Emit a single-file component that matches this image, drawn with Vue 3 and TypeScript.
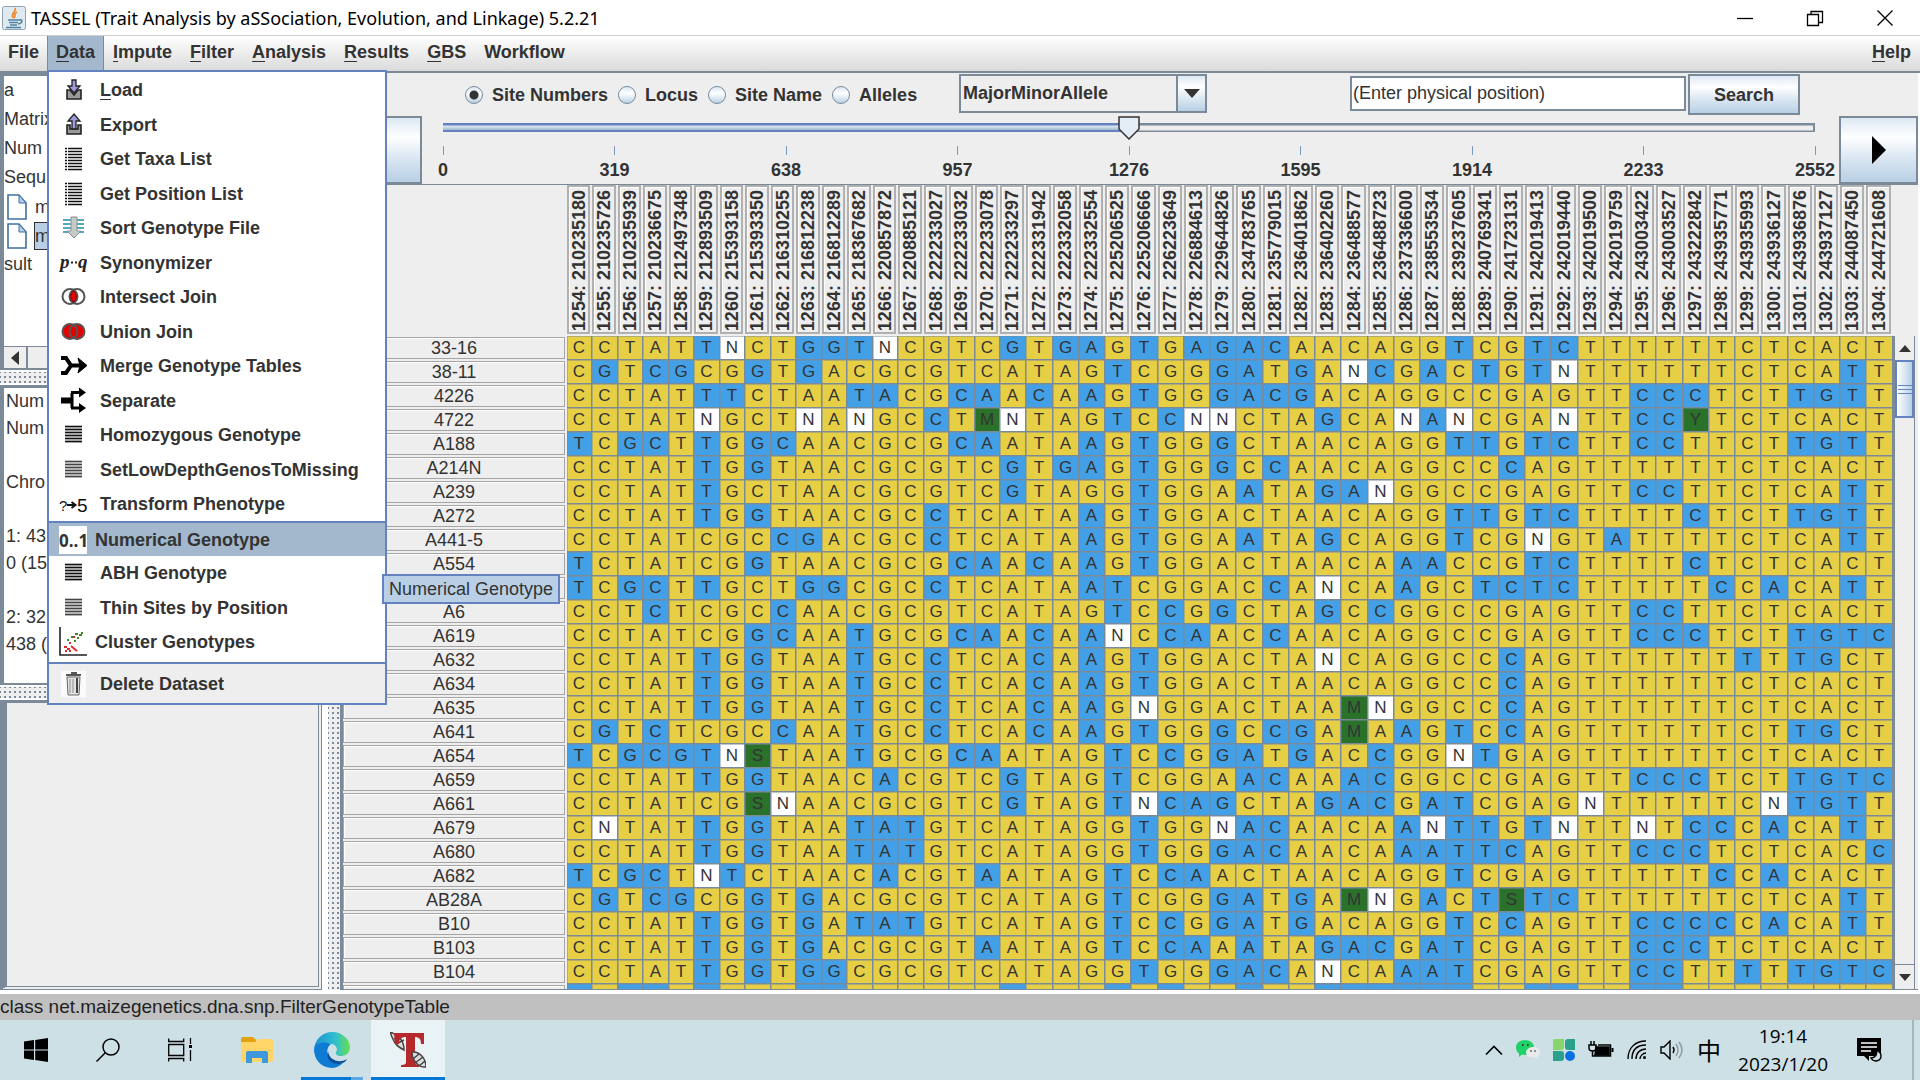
<script setup lang="ts">
import { ref } from 'vue'

interface MenuItem {
  label: string
  icon: string
  mnemonic?: boolean
  tight?: boolean
}

const menuNames = ['File', 'Data', 'Impute', 'Filter', 'Analysis', 'Results', 'GBS', 'Workflow']
const plainMenus = ['File', 'Workflow']
const openMenu = ref('Data')
const highlighted = ref('Numerical Genotype')

const taxaLines = Array.from({ length: 8 }, (_, i) => `<path d="M6 ${4.5 + i * 3}h2M9 ${4.5 + i * 3}h14" stroke="#111" stroke-width="1.6"/>`).join('')
const rowLines = (color: string) =>
  '<path d="M6 6h17v17H6z" fill="#e2e2e2"/>' +
  Array.from({ length: 6 }, (_, i) => `<path d="M6 ${6.5 + i * 3}h17" stroke="${color}" stroke-width="1.6"/>`).join('')

const icons: Record<string, string> = {
  load: '<path d="M8 15v9h14v-9h-3l-4 5-4-5z" fill="#9a9a9a" stroke="#222" stroke-width="1.6"/><path d="M13 5h4v6h4l-6 7-6-7h4z" fill="#9c9cdc" stroke="#222" stroke-width="1.3"/>',
  export: '<path d="M8 15v9h14v-9h-3v4h-8v-4z" fill="#9a9a9a" stroke="#222" stroke-width="1.6"/><path d="M13 19h4v-8h4l-6-7-6 7h4z" fill="#9c9cdc" stroke="#222" stroke-width="1.3"/>',
  taxa: taxaLines,
  sort: '<path d="M4 7h21M4 11h21M4 15h21M4 19h21" stroke="#55a9bd" stroke-width="2"/><path d="M12 4h6v14h4l-7 7-7-7h4z" fill="#c5c9c7" stroke="#8b928f"/>',
  synonym: '<text x="1" y="20" font-family="Liberation Serif, serif" font-style="italic" font-weight="bold" font-size="19" fill="#222">p</text><path d="M12 14.500h2M16 14.500h2" stroke="#222" stroke-width="2"/><text x="19" y="20" font-family="Liberation Serif, serif" font-style="italic" font-weight="bold" font-size="19" fill="#222">q</text>',
  intersect: '<circle cx="11" cy="14.500" r="7.500" fill="#fff" stroke="#555" stroke-width="2"/><circle cx="18" cy="14.500" r="7.500" fill="none" stroke="#555" stroke-width="2"/><path d="M14.500 8.500q6 6 0 12q-6-6 0-12z" fill="#e80000" stroke="#700" />',
  union: '<circle cx="11" cy="14.500" r="7.500" fill="#e80000"/><circle cx="18" cy="14.500" r="7.500" fill="#e80000"/><circle cx="11" cy="14.500" r="7.500" fill="none" stroke="#555" stroke-width="2"/><circle cx="18" cy="14.500" r="7.500" fill="none" stroke="#555" stroke-width="2"/>',
  merge: '<path d="M2 7h5l5 7.500h12M2 22h5l5-7.500" fill="none" stroke="#000" stroke-width="4"/><path d="M19 7l9 7.500-9 7.500 2-7.500z" stroke="#000"/>',
  separate: '<path d="M2 14.500h12" stroke="#000" stroke-width="6"/><path d="M13 7v15M12 6.500h9M12 22h9" stroke="#000" stroke-width="3"/><path d="M20 1.500l7 5-7 5zM20 17l7 5-7 5z" fill="#000"/>',
  rows: rowLines('#111'),
  rowsGray: rowLines('#444'),
  transform: '<text x="0" y="22" font-family="Liberation Sans, sans-serif" font-weight="normal" font-size="15" fill="#111">?</text><path d="M8 16h8M12.500 13l4 3-4 3" fill="none" stroke="#111" stroke-width="2"/><text x="18" y="23" font-family="Liberation Sans, sans-serif" font-weight="normal" font-size="19" fill="#111">5</text>',
  numeric: '<path d="M0 1h28v28H0z" fill="#fff"/><text x="0" y="22" font-family="Open Sans, sans-serif" font-weight="bold" font-size="17" fill="#333">0..1</text>',
  cluster: '<path d="M1 0v28h27" fill="none" stroke="#222" stroke-width="1.6"/><path d="M8 13h2M16 7h3M20 8h3M12 10h2M18 11h2M15 14h2M22 6h2" stroke="#3b8a1e" stroke-width="2"/><path d="M5 20h3M8 22h3M6 24h2M10 16h2M12 19l6 5M14 10h2M10 24h2" stroke="#e5262b" stroke-width="1.8"/>',
  trash: '<path d="M2 2h25v26H2z" fill="#fbfbfb"/><path d="M8 8l1 18h11l1-18z" fill="#e2e2e2" stroke="#666"/><path d="M11 10v14M14 10v14" stroke="#aaa" stroke-width="1.500"/><path d="M18 9v15" stroke="#444" stroke-width="2"/><path d="M7 6h15M12 4h6" stroke="#555" stroke-width="2"/>',
}

const dataMenu: MenuItem[] = [
  { label: 'Load', icon: 'load', mnemonic: true },
  { label: 'Export', icon: 'export' },
  { label: 'Get Taxa List', icon: 'taxa' },
  { label: 'Get Position List', icon: 'taxa' },
  { label: 'Sort Genotype File', icon: 'sort' },
  { label: 'Synonymizer', icon: 'synonym' },
  { label: 'Intersect Join', icon: 'intersect' },
  { label: 'Union Join', icon: 'union' },
  { label: 'Merge Genotype Tables', icon: 'merge' },
  { label: 'Separate', icon: 'separate' },
  { label: 'Homozygous Genotype', icon: 'rows' },
  { label: 'SetLowDepthGenosToMissing', icon: 'rowsGray' },
  { label: 'Transform Phenotype', icon: 'transform' },
  { label: 'Numerical Genotype', icon: 'numeric', tight: true },
  { label: 'ABH Genotype', icon: 'rows' },
  { label: 'Thin Sites by Position', icon: 'rowsGray' },
  { label: 'Cluster Genotypes', icon: 'cluster', tight: true },
]

const labelModes = ['Site Numbers', 'Locus', 'Site Name', 'Alleles']
const labelMode = ref('Site Numbers')
const site = ref(1276)
const ticks = [0, 319, 638, 957, 1276, 1595, 1914, 2233, 2552]
const position = ref('(Enter physical position)')

const reportLines = ['Num', 'Num', '', 'Chro', '', '1: 43', '0 (15', '', '2: 32', '438 (']

const firstSite = 1254
const positions = [
  210235180, 210235726, 210235939, 210236675, 212497348, 212893509, 215393158, 215393350, 216310255,
  216812238, 216812289, 218367682, 220857872, 220885121, 222233027, 222233032, 222233078, 222233297,
  222331942, 222332058, 222332554, 225206525, 225206666, 226223649, 226884613, 229644826, 234783765,
  235779015, 236401862, 236402260, 236488577, 236488723, 237336600, 238553534, 239237605, 240769341,
  241723131, 242019413, 242019440, 242019500, 242019759, 243003422, 243003527, 243222842, 243935771,
  243935993, 243936127, 243936876, 243937127, 244087450, 244721608,
]

const major = 'CCTATCGCTAACGCGTCATAGGCGGACTAACAGGCCGAGTTTTTTCTCACT'

const taxa: [string, string][] = [
  ['33-16', 'CCTATTNCTGGTNCGTCGTGAGTGAGACAACAGGTCGTCTTTTTTCTCACT'],
  ['38-11', 'CGTCGCGGTGACGCGTCATAGTCGGGATGANCGACTGTNTTTTTTCTCATT'],
  ['4226', 'CCTATTTCTAATACGCAACAAGTGGGACGACAGGCCGAGTTCCCTCTTGTT'],
  ['4722', 'CCTATNGCTNANGCCTMNTAGTCCNNCTAGCANANCGANTTCCYTCTCACT'],
  ['A188', 'TCGCTTGGCAACGCGCAATAAGTGGGCTAACAGGTTGTCTTCCTTCTTGTT'],
  ['A214N', 'CCTATTGGTAACGCGTCGTGAGTGGGCCAACAGGCCCAGTTTTTTCTCACT'],
  ['A239', 'CCTATTGCTAACGCGTCGTAGGTGGAATAGANGGCCGAGTTCCTTCTCATT'],
  ['A272', 'CCTATTGGTAACGCCTCATAAGTGGACTAACAGGTTGTCTTTTCTCTTGTT'],
  ['A441-5', 'CCTATCGCCGACGCCTCATAAGTGGAATAGCAGGTCGNGTATTTTCTCATT'],
  ['A554', 'TCTATCGGTAACGCGCAACAAGTGGACTAACAAACCGTCTTTTCTCTCACT'],
  ['', 'TCGCTTGCTGGCGCCTCATAATCGGACCANCAAGCTCTCTTTTTCCACATT'],
  ['A6', 'CCTCTCGCCAACGCGTCATAGTCCGGCTAGCCGGCCGAGTTCCTTCTCACT'],
  ['A619', 'CCTATCGGCAATGCGCAACAANCCAACCAACAGGCCGAGTTCCCTCTTGTC'],
  ['A632', 'CCTATTGGTAATGCCTCACAAGTGGACTANCAGGCCCAGTTTTTTTTTGCT'],
  ['A634', 'CCTATTGGTAATGCCTCACAAGTGGACTAACAGGCCCAGTTTTTTCTCACT'],
  ['A635', 'CCTATTGGTAATGCCTCACAAGNGGACTAAMNGGCCCAGTTTTTTCTCACT'],
  ['A641', 'CGTCTCGCCAATGCCTCACAAGTGGGCCGAMAAGTCCAGTTTTTTCTTGCT'],
  ['A654', 'TCGCGTNSTAATGCGCAATAGTCCGGATGACCGGNTGAGTTTTTTCTCACT'],
  ['A659', 'CCTATTGGTAACACGTCGTAGTCGGAACAAACGGCCGAGTTCCCTCTTGTC'],
  ['A661', 'CCTATCGSNAACGCGTCGTAGTNCAGCTAGACGATCGAGNTTTTTCNTGTT'],
  ['A679', 'CNTATTGGTAATATGTCATAGGTGGNACAACAANTTGTNTTNTCCCACATT'],
  ['A680', 'CCTATTGGTAATATGTCATAGGTGGGACAACAAATTCAGTTCCCTCTCACC'],
  ['A682', 'TCGCTNTCTAACACGTAATAGTCCAACTAACAGGTCGAGTTTTTCCACACT'],
  ['AB28A', 'CGTCGCGGTGACGCGTCATAGTCGGGATGAMNGACTSTCTTTTTTCTCATT'],
  ['B10', 'CCTATTGGTGATATGTCATAGTCCGGATGACAGGTCCAGTTCCCCCACATT'],
  ['B103', 'CCTATTGGTGACGCGTAATAGTCCAAATAGACGATCGAGTTCCCTCTCACT'],
  ['B104', 'CCTATTGGTGGCGCGTCATAGGTGGGACANCAAATCGAGTTCCTTTTTGTC'],
  ['', 'TCGCTTGCTGGCGCGTCGTAGTCCGAATAGACAATCGTCTTCCTTCTCACT'],
]

function cellClass(allele: string, column: number): string {
  if (allele === 'N') return 'missing'
  if (!'ACGT'.includes(allele)) return 'het'
  return allele === major[column] ? 'major' : 'minor'
}

function columnClass(column: number): string {
  if (column < 18) return column % 2 ? 'w26' : 'w25'
  return column % 4 === 2 ? 'w27' : 'w26'
}
</script>

<template>
  <div class="desktop">
    <header class="titlebar">
      <svg class="java" width="24" height="24" viewBox="0 0 24 24" aria-hidden="true">
        <rect x="0.500" y="0.500" width="23" height="23" rx="2" fill="#dfe9f0" stroke="#8fa3b3" />
        <path d="M13 2c2 4-5 5-2 10M15 6c-4 2-1 4-3 6" fill="none" stroke="#ef8a3a" stroke-width="1.800" />
        <path d="M6 14h11M7 16.500h9M8 19h7M4 21.500h15M17 14c4-1 4 3-1 4" fill="none" stroke="#5382a1" stroke-width="1.600" />
      </svg>
      <h1>TASSEL (Trait Analysis by aSSociation, Evolution, and Linkage) 5.2.21</h1>
      <div class="window-buttons">
        <button type="button" aria-label="Minimize"><svg width="18" height="18" viewBox="0 0 18 18"><path d="M1 9.500h16" /></svg></button>
        <button type="button" aria-label="Restore"><svg width="18" height="18" viewBox="0 0 18 18"><path d="M1.500 5.500h11v11h-11zM5 5V2.500h11.500v11H13" /></svg></button>
        <button type="button" aria-label="Close"><svg width="18" height="18" viewBox="0 0 18 18"><path d="M1.500 1.500l15 15M16.500 1.500l-15 15" /></svg></button>
      </div>
    </header>

    <nav class="menubar">
      <div v-for="name in menuNames" :key="name" class="menu-slot">
        <button type="button" class="menu-name" :class="{ open: openMenu === name }" @click="openMenu = openMenu === name ? '' : name">
          <template v-if="plainMenus.includes(name)">{{ name }}</template>
          <template v-else><u>{{ name[0] }}</u>{{ name.slice(1) }}</template>
        </button>
        <div v-if="name === 'Data' && openMenu === 'Data'" class="dropdown">
          <button
            v-for="item in dataMenu"
            :key="item.label"
            type="button"
            class="item"
            :class="{ active: highlighted === item.label, tight: item.tight }"
            @mouseenter="highlighted = item.label"
          >
            <svg width="28" height="30" viewBox="0 0 28 30" aria-hidden="true" v-html="icons[item.icon]"></svg>
            <span v-if="item.mnemonic"><u>{{ item.label[0] }}</u>{{ item.label.slice(1) }}</span>
            <span v-else>{{ item.label }}</span>
          </button>
          <button type="button" class="item delete">
            <svg width="28" height="30" viewBox="0 0 28 30" aria-hidden="true" v-html="icons.trash"></svg>
            <span>Delete Dataset</span>
          </button>
          <div class="tooltip" role="tooltip">Numerical Genotype</div>
        </div>
      </div>
      <button type="button" class="menu-name help"><u>H</u>elp</button>
    </nav>

    <main class="workspace">
      <aside class="side">
        <section class="pane tree">
          <ul>
            <li>a</li>
            <li>Matrix</li>
            <li>Num</li>
            <li>Sequ</li>
            <li v-for="n in 2" :key="n" class="leaf">
              <svg width="20" height="26" viewBox="0 0 20 26" aria-hidden="true"><path d="M1 1h11l7 8v16H1z" fill="#fff" stroke="#3f6fa3" stroke-width="1.600" /><path d="M12 1v8h7z" fill="#b8cfe5" stroke="#3f6fa3" /></svg>
              <span :class="{ selected: n === 2 }">m</span>
            </li>
            <li>sult</li>
          </ul>
          <div class="hscroll">
            <button type="button" aria-label="Scroll left"><svg width="8" height="14" viewBox="0 0 8 14"><path d="M8 0v14L0 7z" fill="#333" /></svg></button>
            <div class="hthumb"></div>
          </div>
        </section>
        <div class="split horizontal"></div>
        <section class="pane report">
          <p v-for="(line, i) in reportLines" :key="i">{{ line }}</p>
        </section>
        <div class="split horizontal"></div>
        <section class="pane empty"></section>
      </aside>
      <div class="split vertical"></div>

      <section class="viewer">
        <form class="controls" @submit.prevent>
          <div class="modes">
            <label v-for="mode in labelModes" :key="mode"><input v-model="labelMode" type="radio" name="mode" :value="mode" />{{ mode }}</label>
          </div>
          <select class="combo" aria-label="Allele display">
            <option>MajorMinorAllele</option>
          </select>
          <div class="search">
            <input v-model="position" type="text" aria-label="Physical position" />
            <button type="submit" class="metal">Search</button>
          </div>
        </form>
        <div class="navigator">
          <button type="button" class="metal step" aria-label="Previous sites"></button>
          <div class="slider">
            <input v-model="site" type="range" min="0" max="2552" aria-label="Site" />
            <ul>
              <li v-for="t in ticks" :key="t">{{ t }}</li>
            </ul>
          </div>
          <button type="button" class="metal step" aria-label="Next sites"><svg width="14" height="28" viewBox="0 0 14 28"><path d="M0 0l14 14L0 28z" /></svg></button>
        </div>

        <div class="grid">
          <div class="grid-view">
            <table>
              <colgroup>
                <col class="names" />
                <col v-for="(p, c) in positions" :key="p" :class="columnClass(c)" />
              </colgroup>
              <thead>
                <tr>
                  <td></td>
                  <th v-for="(p, c) in positions" :key="p" scope="col"><div><span>{{ firstSite + c }}: {{ p }}</span></div></th>
                </tr>
              </thead>
              <tbody>
                <tr v-for="([name, calls], r) in taxa" :key="r">
                  <th scope="row"><div>{{ name }}</div></th>
                  <td v-for="(allele, c) in calls" :key="c" :class="cellClass(allele, c)">{{ allele }}</td>
                </tr>
              </tbody>
            </table>
          </div>
          <div class="vscroll">
            <button type="button" aria-label="Scroll up"><svg width="12" height="7" viewBox="0 0 12 7"><path d="M6 0l6 7H0z" fill="#333" /></svg></button>
            <div class="vtrack"><div class="vthumb"></div></div>
            <button type="button" aria-label="Scroll down"><svg width="12" height="7" viewBox="0 0 12 7"><path d="M6 7l6-7H0z" fill="#333" /></svg></button>
          </div>
        </div>
      </section>
    </main>

    <div class="status">class net.maizegenetics.dna.snp.FilterGenotypeTable</div>

    <footer class="taskbar">
      <button type="button" class="task" aria-label="Start"><svg width="24" height="24" viewBox="0 0 24 24"><path d="M0 3.500l10-1.400v9.400H0zM11.200 1.900L24 0v11.500H11.200zM0 12.600h10V22L0 20.600zM11.200 12.600H24V24l-12.800-1.900z" /></svg></button>
      <button type="button" class="task" aria-label="Search"><svg width="24" height="24" viewBox="0 0 24 24" fill="none" stroke="#000" stroke-width="1.500"><circle cx="15" cy="9" r="8" /><path d="M9.300 14.700L0.500 23.500" /></svg></button>
      <button type="button" class="task" aria-label="Task view"><svg width="24" height="24" viewBox="0 0 24 24" fill="none" stroke="#000" stroke-width="1.300"><path d="M0.700 6.500h15v11h-15zM0.700 0.500v3h15v-3M0.700 23.500v-3h15v3M22.500 0v6M22.500 12v11" /><path d="M21 7h3v3h-3z" fill="#000" stroke="none" /></svg></button>
      <button type="button" class="task folder" aria-label="File Explorer">
        <svg width="32" height="26" viewBox="0 0 32 26"><path d="M0 2q0-2 2-2h10l3 3v4H0z" fill="#e3a20c" /><path d="M0 5h14l3-3h13q2 0 2 2v19q0 2-2 2H2q-2 0-2-2z" fill="#ffd567" /><path d="M5 26V16q0-2 2-2h18q2 0 2 2v10h-6v-5H11v5z" fill="#3f97dc" /></svg>
      </button>
      <button type="button" class="task edge" aria-label="Edge">
        <svg width="36" height="36" viewBox="0 0 36 36">
          <defs>
            <linearGradient id="edge-top" x1="0" x2="1"><stop offset="0" stop-color="#1d8fd6" /><stop offset="0.600" stop-color="#2ec0cf" /><stop offset="1" stop-color="#69e04e" /></linearGradient>
          </defs>
          <path d="M0 17C1 7 9 0 18 0c11 0 18 8 18 15 0 6-4 9-9 9-4 0-6-2-5-4 2-2 1-7-4-8C11 11 2 12 0 17z" fill="url(#edge-top)" />
          <path d="M0 17c2-7 11-8 17-5-3 2-5 7-3 12 2 6 8 9 15 7-3 3-7 5-12 5C7 35 0 28 0 17z" fill="#0f7bd3" />
          <path d="M14 19c-3 7 3 14 12 13 4-1 6-3 7-5-8 5-18 1-19-8z" fill="#0c4f9e" />
        </svg>
      </button>
      <button type="button" class="task tassel" aria-label="TASSEL">
        <svg width="36" height="36" viewBox="0 0 36 36">
          <path d="M0 0c9 3 14 9 14 18C5 14 3 8 0 0z" fill="#ddd" stroke="#444" stroke-width="1.500" />
          <path d="M4 7l7-3M6 12l8-4" stroke="#444" stroke-width="1.500" />
          <path d="M4 1h30v11h-3c0-5-2-7-6-7v25c0 2 1 3 4 3v2H11v-2c4 0 5-1 5-3V5c-5 0-7 2-7 7H5z" fill="#b5292c" />
          <path d="M22 20c7-1 14 6 14 15-7 1-14-6-14-15z" fill="#ddd" stroke="#444" stroke-width="1.500" />
          <path d="M23 27l6-5M25 31l8-6M29 34l6-5" stroke="#444" stroke-width="1.500" />
        </svg>
      </button>

      <div class="tray">
        <svg width="18" height="12" viewBox="0 0 18 12" fill="none" stroke="#000" stroke-width="1.600"><path d="M1 10.500l8-8 8 8" /></svg>
        <svg width="24" height="20" viewBox="0 0 24 20"><path d="M9 0c5 0 9 3 9 7.500S14 15 9 15l-3-.5L3 17v-3.500C1 12 0 10 0 7.500 0 3 4 0 9 0z" fill="#1fd267" /><path d="M17 7c4 0 7 2 7 5.500 0 2-1 3-2 4V19l-2-1.500h-3c-4 0-7-2-7-5S13 7 17 7z" fill="#e9e9e9" /><path d="M6 5h1.500M11 5h1.500M14.500 11h1M18.500 11h1" stroke="#333" stroke-width="1.800" /></svg>
        <svg width="22" height="22" viewBox="0 0 22 22"><path d="M0 2q0-2 2-2h9v8q0 3-3 3H0z" fill="#86d66b" /><path d="M12 3q0-3 3-3h7v11h-7q-3 0-3-3z" fill="#2ba08a" /><path d="M0 12h8q3 0 3 3v4q0 3-3 3H0z" fill="#2ba08a" /><circle cx="17" cy="17" r="5" fill="#0a6fe0" /></svg>
        <svg width="26" height="18" viewBox="0 0 26 18" fill="none" stroke="#000" stroke-width="1.500"><path d="M1 4h7v3q0 3-3.500 3T1 7zM3 0v4M6 0v4M4.500 10v5h18V4H10" /><path d="M8 6h13v8H7z" fill="#000" /><path d="M24.500 7v4" stroke-width="2" /></svg>
        <svg width="20" height="20" viewBox="0 0 20 20" fill="none" stroke="#000" stroke-width="1.400"><path d="M1 19C1 8 8 1 19 1M5 19C5 10 10 5 19 5M9 19c0-6 4-10 10-10M13 19c0-3 3-6 6-6" /><circle cx="17.500" cy="17.500" r="1.500" fill="#000" stroke="none" /></svg>
        <svg width="24" height="20" viewBox="0 0 24 20" fill="none" stroke="#000" stroke-width="1.400"><path d="M1 7h3l6-6v18l-6-6H1z" /><path d="M13 7q2 3 0 6" /><path d="M16 4q4 6 0 12M19 2q6 8 0 16" stroke="#8a9a9e" /></svg>
        <span class="ime">中</span>
        <div class="clock"><span>19:14</span><span>2023/1/20</span></div>
        <svg width="26" height="26" viewBox="0 0 26 26"><path d="M1 1h24v18h-12v5l-5-5H1z" /><path d="M5 6h16M5 10h16M5 14h10" stroke="#fff" stroke-width="1.400" /><path d="M20 13c2 4-1 8-5 8 3 5 10 3 10-2 0-3-2-5-5-6z" fill="#cde0e5" stroke="#000" stroke-width="1.400" /></svg>
      </div>
    </footer>
  </div>
</template>

<style>
body {
  overflow: hidden;
}
</style>

<style scoped>
.desktop {
  display: flex;
  flex-direction: column;
  height: 100vh;
  background: #eee;
  color: #333;
  font: 18px/24px "Liberation Sans", Arial, sans-serif;
}
.desktop * {
  box-sizing: border-box;
}
button,
input,
select {
  margin: 0;
  padding: 0;
  border: 0;
  background: none;
  color: inherit;
  font: inherit;
}
ul {
  margin: 0;
  padding: 0;
  list-style: none;
}
u {
  text-underline-offset: 3px;
}

.titlebar {
  display: flex;
  align-items: center;
  flex: none;
  height: 35px;
  padding-left: 2px;
  background: #fff;
  color: #000;
}
.java {
  flex: none;
}
h1 {
  flex: 1;
  margin: 0 0 0 5px;
  font: 18px/24px "Noto Sans", "Open Sans", sans-serif;
  white-space: nowrap;
}
.window-buttons {
  display: flex;
}
.window-buttons button {
  display: grid;
  place-items: center;
  width: 70px;
  height: 34px;
}
.window-buttons path {
  fill: none;
  stroke: #000;
  stroke-width: 1.3;
}

.menubar {
  display: flex;
  flex: none;
  height: 38px;
  border-top: 1px solid #d0d0d0;
  border-bottom: 2px solid #7a8a99;
  background: linear-gradient(#fff, #dadada);
  font-weight: bold;
  position: relative;
  z-index: 2;
}
.menu-slot {
  position: relative;
}
.menu-name {
  height: 35px;
  padding: 0 8px 4px;
  font-weight: bold;
  border: 1px solid transparent;
  border-width: 0 1px;
}
.menu-slot:first-child .menu-name {
  padding: 0 7px 4px;
}
.menu-name.open {
  border-color: #7a8a99;
  background: #a3b8cc;
}
.menu-name.help {
  margin-left: auto;
}
.dropdown {
  position: absolute;
  top: 34px;
  left: 0;
  width: 340px;
  padding-top: 1px;
  border: 2px solid #6382bf;
  background: #fff;
}
.item {
  display: flex;
  align-items: center;
  gap: 13px;
  width: 100%;
  height: 34px;
  padding-left: 10px;
  font-weight: bold;
  text-align: left;
  white-space: nowrap;
}
.item:nth-child(even) {
  height: 35px;
}
.item.tight {
  gap: 8px;
}
.item.active {
  border-top: 2px solid #6382bf;
  background: #a3b8cc;
}
.item.delete {
  height: 41px;
  margin-top: 3px;
  border-top: 2px solid #6382bf;
  background: #eee;
}
.tooltip {
  position: absolute;
  top: 502px;
  left: 333px;
  padding: 1px 5px;
  border: 2px solid #6382bf;
  background: #b8cfe5;
  font-weight: normal;
  white-space: nowrap;
}

.workspace {
  display: flex;
  flex: 1;
  min-height: 0;
  padding-bottom: 4px;
  background: #fff;
}
.side {
  display: flex;
  flex-direction: column;
  flex: none;
  width: 328px;
}
.pane {
  margin-right: 6px;
  border: 2px solid #7a8a99;
  border-width: 3px 2px 2px 4px;
  background: #fff;
  overflow: hidden;
}
.tree {
  display: flex;
  flex-direction: column;
  flex: none;
  height: 297px;
}
.tree ul {
  flex: 1;
}
.tree li {
  height: 29px;
  line-height: 29px;
}
.leaf {
  display: flex;
  align-items: center;
  gap: 7px;
  padding-left: 3px;
}
.leaf span {
  line-height: 26px;
  border: 1px solid transparent;
}
.leaf .selected {
  border-color: #333;
  background: #b8cfe5;
}
.hscroll {
  display: flex;
  height: 22px;
  border-top: 1px solid #7a8a99;
  background: #eee;
}
.hscroll button {
  display: grid;
  place-items: center;
  width: 24px;
  border-right: 2px solid #7a8a99;
}
.hthumb {
  flex: 1;
}
.split {
  flex: none;
  background: #eee radial-gradient(circle at 1px 1px, #7a8a99 1px, transparent 1px) 4px 4px / 5px 5px;
}
.split.horizontal {
  height: 15px;
  border: solid #fff;
  border-width: 2px 0;
}
.split.vertical {
  width: 12px;
}
.report {
  flex: none;
  height: 300px;
  padding-left: 2px;
}
.report p {
  height: 27px;
  margin: 0;
  line-height: 27px;
  white-space: nowrap;
}
.empty {
  flex: 1;
  border-left-width: 7px;
  border-right: 4px double #7a8a99;
  border-bottom: 4px double #7a8a99;
  background: #eee;
}

.viewer {
  display: flex;
  flex-direction: column;
  flex: 1;
  min-width: 0;
  margin-right: 2px;
  border-left: 3px solid #7a8a99;
  border-bottom: 1px solid #7a8a99;
  background: #eee;
}
.controls {
  display: flex;
  flex: none;
  height: 43px;
  padding: 1px 118px 0 122px;
  font-weight: bold;
}
.modes {
  display: flex;
  align-items: center;
  gap: 10px;
  width: 494px;
}
.modes label {
  display: flex;
  align-items: center;
  gap: 9px;
  white-space: nowrap;
}
.modes input {
  appearance: none;
  width: 18px;
  height: 18px;
  border: 1px solid #7a8a99;
  border-radius: 50%;
  background: linear-gradient(#dde8f3, #fff 40%, #b8cfe5);
}
.modes input:checked {
  background: radial-gradient(circle, #333 4px, transparent 5px), linear-gradient(#dde8f3, #fff 40%, #b8cfe5);
}
.combo {
  appearance: none;
  width: 248px;
  height: 39px;
  padding: 0 2px 1px;
  border: 2px solid #7a8a99;
  border-radius: 0;
  background:
    url("data:image/svg+xml,%3Csvg xmlns='http://www.w3.org/2000/svg' width='16' height='9'%3E%3Cpath d='M0 0h16L8 9z' fill='%23333'/%3E%3C/svg%3E") right 5px center no-repeat,
    linear-gradient(#7a8a99, #7a8a99) right 27px center / 2px 100% no-repeat,
    linear-gradient(#dde8f3, #fff 30%, #b8cfe5) right / 27px 100% no-repeat,
    #eee;
}
.search {
  display: flex;
  gap: 2px;
  margin-left: auto;
}
.search input {
  width: 336px;
  height: 35px;
  margin-top: 2px;
  padding: 0 1px;
  border: 2px solid #7a8a99;
  background: #fff;
  font-weight: normal;
}
.metal {
  border: 2px solid #7a8a99;
  background: linear-gradient(#dde8f3, #fff 30%, #dde8f3 60%, #b8cfe5);
}
.search button {
  width: 112px;
  height: 41px;
}
.navigator {
  display: flex;
  flex: none;
  height: 69px;
  border-bottom: 1px solid #7a8a99;
}
.step {
  display: grid;
  place-items: center;
  flex: none;
  width: 79px;
}
.slider {
  flex: 1;
  margin: 0 13px 0 10px;
}
.slider input {
  display: block;
  appearance: none;
  width: 100%;
  height: 24px;
  background:
    linear-gradient(#6382bf 2px, #dde8f3 3px, #a3b8cc 7px, #6382bf 7px) 11px 7px / calc(50% - 11px) 9px no-repeat,
    linear-gradient(90deg, transparent calc(100% - 2px), #7a8a99 0) 11px 7px / calc(100% - 22px) 9px no-repeat,
    linear-gradient(#7a8a99 2px, #eee 3px, #eee 7px, #7a8a99 8px) 11px 7px / calc(100% - 22px) 9px no-repeat;
}
.slider input::-webkit-slider-thumb {
  appearance: none;
  width: 22px;
  height: 24px;
  background: url("data:image/svg+xml,%3Csvg xmlns='http://www.w3.org/2000/svg' width='22' height='24'%3E%3Cpath d='M1 1h20v12L11 23 1 13z' fill='%23e4edf6' stroke='%23333' stroke-width='1.500'/%3E%3C/svg%3E");
}
.slider ul {
  display: flex;
  justify-content: space-between;
  height: 36px;
  margin: 6px 11px 0;
}
.slider li {
  display: flex;
  flex-direction: column;
  align-items: center;
  width: 0;
  font-weight: bold;
  line-height: 24px;
}
.slider li::before {
  content: "";
  flex: none;
  width: 1px;
  height: 9px;
  margin-bottom: 3px;
  background: #7a9ab9;
}

.grid {
  display: flex;
  flex: 1;
  min-height: 0;
  margin-right: 3px;
}
.grid-view {
  flex: 1;
  min-width: 0;
  overflow: hidden;
}
table {
  width: 100%;
  table-layout: fixed;
  border-spacing: 0;
}
.names {
  width: 224px;
}
.w25 {
  width: 25px;
}
.w26 {
  width: 26px;
}
.w27 {
  width: 27px;
}
th,
td {
  padding: 0;
}
thead th {
  height: 151px;
  padding-right: 2px;
  vertical-align: top;
}
thead th div {
  display: flex;
  align-items: center;
  justify-content: center;
  height: 149px;
  padding-top: 2px;
  border: 2px solid #b0b0b0;
  box-shadow: inset 1px 1px #fff;
}
thead span {
  writing-mode: vertical-rl;
  transform: rotate(180deg);
  font-weight: bold;
  line-height: 20px;
  white-space: nowrap;
}
tbody tr {
  height: 24px;
}
tbody th {
  padding: 1px 2px 1px 0;
  font-weight: normal;
}
tbody th div {
  height: 22px;
  border: 1px solid #a5a5a5;
  box-shadow: inset 1px 1px #fff;
  line-height: 21px;
}
tbody td {
  height: 24px;
  border: 1px solid #7a8a99;
  border-width: 0 1px 1px 0;
  box-shadow: inset 1px 1px rgba(122, 138, 153, 0.5);
  font-size: 17px;
  line-height: 23px;
  text-align: center;
}
.major {
  background: #e6cf45;
}
.minor {
  background: #439fe6;
}
.missing {
  background: #fff;
}
.het {
  background: #2a712a;
}
.vscroll {
  display: flex;
  flex-direction: column;
  flex: none;
  width: 22px;
  margin-top: 151px;
  border: solid #7a8a99;
  border-width: 0 1px 0 2px;
}
.vscroll button {
  display: grid;
  place-items: center;
  height: 24px;
}
.vtrack {
  flex: 1;
  border-bottom: 1px solid #7a8a99;
}
.vthumb {
  height: 58px;
  border: 2px solid #6382bf;
  background:
    linear-gradient(#6382bf 1px, transparent 1px) center 23px / 14px 4px no-repeat,
    linear-gradient(#6382bf 1px, transparent 1px) center 27px / 14px 4px no-repeat,
    linear-gradient(#6382bf 1px, transparent 1px) center 31px / 14px 4px no-repeat,
    linear-gradient(90deg, #fff, #b8cfe5);
}

.status {
  flex: none;
  height: 26px;
  background: #c0c0c0;
  color: #222;
  font-size: 19px;
  line-height: 26px;
}
.taskbar {
  display: flex;
  flex: none;
  height: 60px;
  background: #cde0e5;
  color: #000;
}
.task {
  display: grid;
  place-items: center;
  width: 72px;
}
.task.folder {
  width: 80px;
  padding-left: 2px;
}
.task.edge {
  width: 62px;
  margin-right: 8px;
  margin-left: 5px;
  padding: 3px 0;
  background: linear-gradient(90deg, #0078d7 50px, #5ca9e4 50px) bottom / 100% 3px no-repeat;
}
.task.tassel {
  width: 74px;
  padding-top: 3px;
  border-bottom: 3px solid #0078d7;
  background: #e9f2f4;
}
.tray {
  display: flex;
  align-items: center;
  gap: 13px;
  margin-left: auto;
  margin-right: 6px;
  padding-right: 30px;
  border-right: 2px solid #a5b6bb;
}
.ime {
  font: 24px/30px "Noto Sans CJK SC", sans-serif;
}
.clock {
  display: flex;
  flex-direction: column;
  align-items: center;
  margin: 0 15px 0 4px;
  font: 19px/28px "Open Sans", "Noto Sans", sans-serif;
}
</style>
